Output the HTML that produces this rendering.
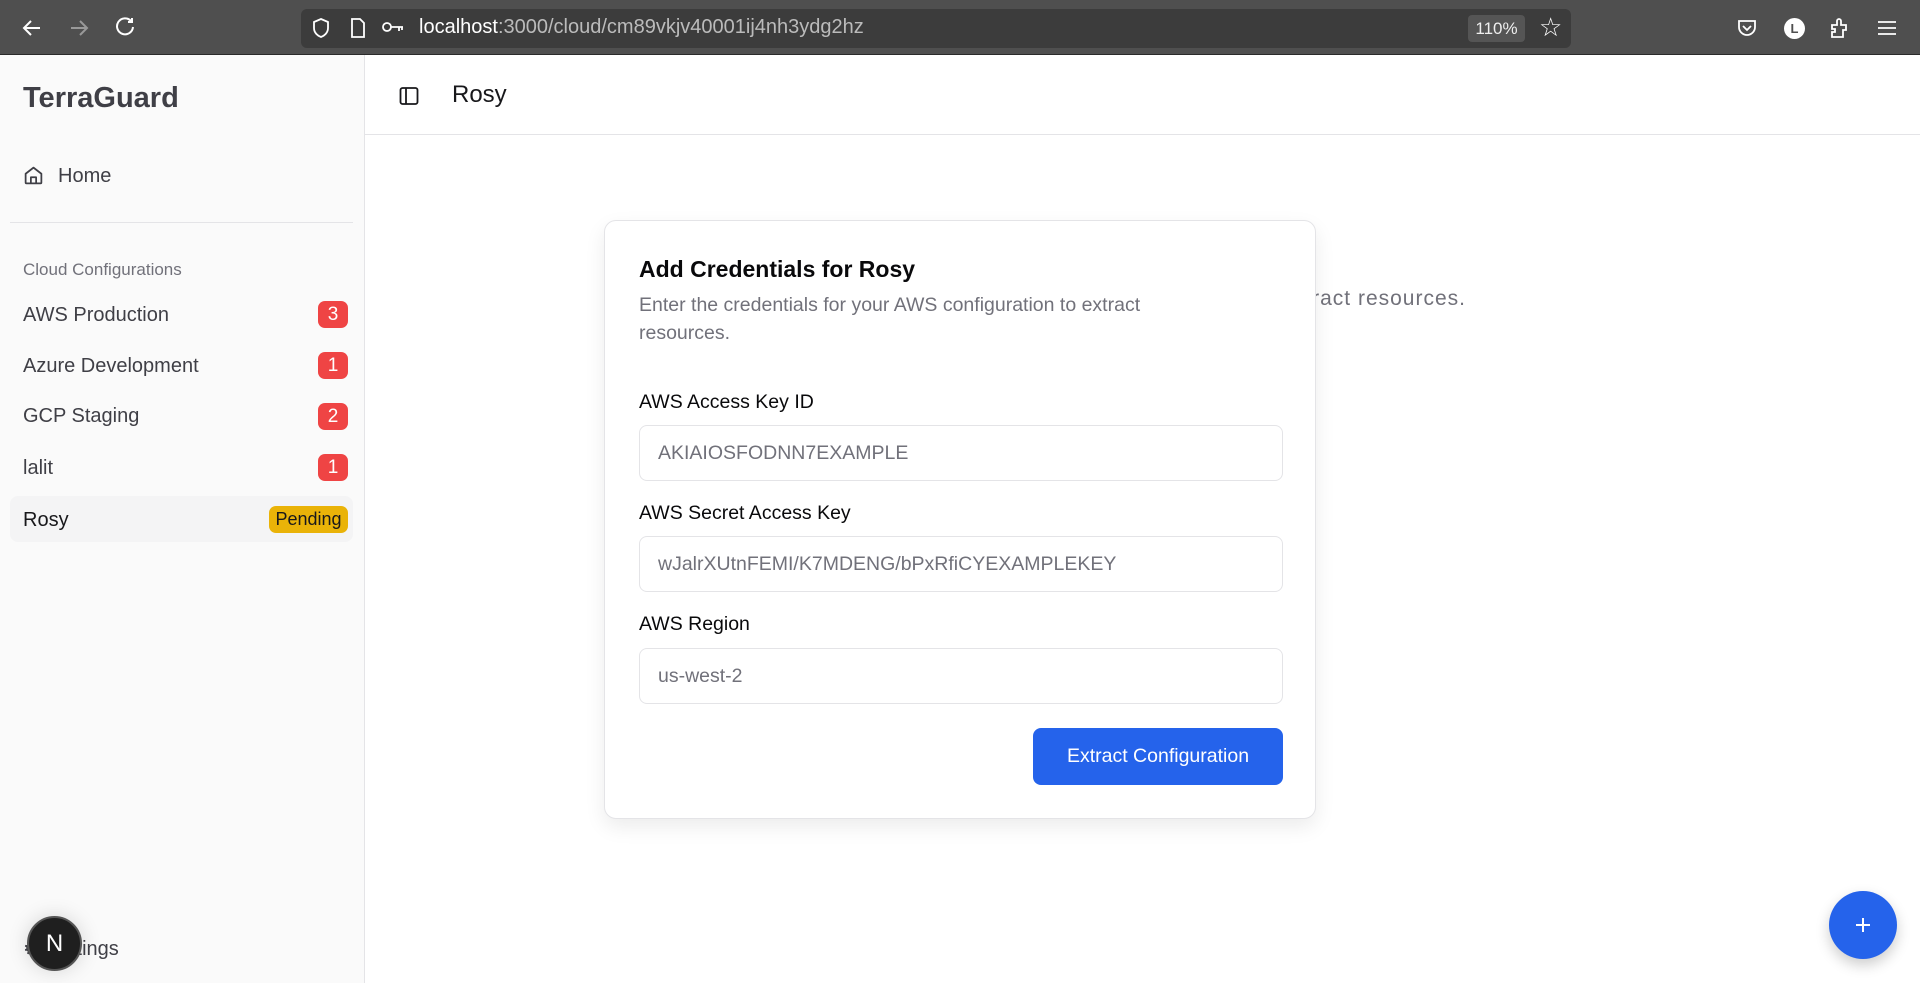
<!DOCTYPE html>
<html><head><meta charset="utf-8"><style>
*{box-sizing:border-box;margin:0;padding:0}
body{width:1920px;height:983px;overflow:hidden;font-family:"Liberation Sans",sans-serif;background:#fff;position:relative;color:#18181b}
.abs{position:absolute}
.bar{left:0;top:0;width:1920px;height:55px;background:#4f4f4f;border-bottom:1px solid #2a2a2a}
.url{left:301px;top:9px;width:1270px;height:39px;background:#3c3c3c;border-radius:6px}
.side{left:0;top:55px;width:365px;height:928px;background:#fafafa;border-right:1px solid #e4e4e7}
.item{position:absolute;left:23px;font-size:20px;color:#3f3f46;line-height:24px}
.badge{position:absolute;left:318px;width:30px;height:27px;border-radius:7px;background:#ef4444;color:#fff;font-size:19px;text-align:center;line-height:27px}
.card{left:604px;top:220px;width:712px;height:599px;background:#fff;border:1px solid #e4e4e7;border-radius:12px;box-shadow:0 8px 20px rgba(0,0,0,.08)}
.lbl{position:absolute;left:34px;font-size:19.5px;color:#09090b;font-weight:500}
.inp{position:absolute;left:34px;width:644px;height:56px;border:1px solid #e4e4e7;border-radius:8px;font-size:19.5px;color:#71717a;padding-left:18px;line-height:54px}
</style></head><body>
<div class="abs bar"></div>
<svg class="abs" style="left:20px;top:17px" width="24" height="22" viewBox="0 0 24 22" fill="none" stroke="#fff" stroke-width="2"><path d="M20 11H4M11 4l-7 7 7 7"/></svg>
<svg class="abs" style="left:67px;top:17px" width="24" height="22" viewBox="0 0 24 22" fill="none" stroke="#999" stroke-width="2"><path d="M4 11h16M13 4l7 7-7 7"/></svg>
<svg class="abs" style="left:114px;top:16px" width="22" height="22" viewBox="0 0 22 22" fill="none" stroke="#fff" stroke-width="2"><path d="M17 5A8 8 0 1 0 19 11"/><path d="M18 2v4h-4"/></svg>
<div class="abs url"></div>
<svg class="abs" style="left:311px;top:17px" width="20" height="22" viewBox="0 0 20 22" fill="none" stroke="#fff" stroke-width="1.8"><path d="M10 2l7 3v6c0 5-4 8-7 9-3-1-7-4-7-9V5z"/></svg>
<svg class="abs" style="left:349px;top:18px" width="18" height="20" viewBox="0 0 18 20" fill="none" stroke="#fff" stroke-width="1.8"><path d="M3 1h8l4 4v14H3z"/></svg>
<svg class="abs" style="left:382px;top:20px" width="22" height="14" viewBox="0 0 22 14" fill="none" stroke="#fff" stroke-width="1.8"><circle cx="5" cy="7" r="4"/><path d="M9 7h12M17 7v4M20 7v3"/></svg>
<div class="abs" style="left:419px;top:16px;font-size:20px;color:#fff">localhost<span style="color:#bbb">:3000/cloud/cm89vkjv40001ij4nh3ydg2hz</span></div>
<div class="abs" style="left:1468px;top:15px;width:57px;height:27px;background:#555;border-radius:4px;color:#eee;font-size:17px;text-align:center;line-height:27px">110%</div>
<div class="abs" style="left:1539px;top:12px;font-size:26px;color:#fff">☆</div>
<svg class="abs" style="left:1737px;top:18px" width="20" height="20" viewBox="0 0 20 20" fill="none" stroke="#fff" stroke-width="1.8"><path d="M2 3h16v6a8 8 0 0 1-16 0z"/><path d="M6 8l4 4 4-4"/></svg>
<div class="abs" style="left:1784px;top:18px;width:21px;height:21px;border-radius:50%;background:#fff;color:#4f4f4f;font-size:13px;font-weight:bold;text-align:center;line-height:21px">L</div>
<svg class="abs" style="left:1830px;top:17px" width="20" height="22" viewBox="0 0 20 22" fill="none" stroke="#fff" stroke-width="1.8"><path d="M2 8h5V4a2 2 0 0 1 4 0v4h5v5h-3v7H2v-5h3v-3H2z"/></svg>
<svg class="abs" style="left:1877px;top:20px" width="20" height="16" viewBox="0 0 20 16" stroke="#fff" stroke-width="1.8"><path d="M1 2h18M1 8h18M1 14h18"/></svg>

<div class="abs side"></div>
<div class="abs" style="left:23px;top:82px;font-size:29px;font-weight:bold;color:#3f3f46">TerraGuard</div>
<svg class="abs" style="left:23px;top:165px" width="21" height="21" viewBox="0 0 24 24" fill="none" stroke="#3f3f46" stroke-width="2" stroke-linejoin="round"><path d="M3 10l9-7 9 7v10a1 1 0 0 1-1 1H4a1 1 0 0 1-1-1z"/><path d="M9 21v-7h6v7"/></svg>
<div class="item" style="left:58px;top:164px">Home</div>
<div class="abs" style="left:10px;top:222px;width:343px;height:1px;background:#e4e4e7"></div>
<div class="item" style="top:258px;font-size:17px;color:#71717a">Cloud Configurations</div>
<div class="item" style="top:303px">AWS Production</div><div class="badge" style="top:301px">3</div>
<div class="item" style="top:354px">Azure Development</div><div class="badge" style="top:352px">1</div>
<div class="item" style="top:404px">GCP Staging</div><div class="badge" style="top:403px">2</div>
<div class="item" style="top:456px">lalit</div><div class="badge" style="top:454px">1</div>
<div class="abs" style="left:10px;top:496px;width:343px;height:46px;background:#f4f4f5;border-radius:8px"></div>
<div class="item" style="top:508px;color:#18181b;font-weight:500">Rosy</div>
<div class="badge" style="top:506px;left:269px;width:79px;background:#eab308;color:#18181b;font-size:18px">Pending</div>
<div class="item" style="top:937px">⚙ Settings</div>
<div class="abs" style="left:27px;top:916px;width:55px;height:55px;border-radius:50%;background:#1f1f1f;border:2px solid #555;color:#fff;font-size:24px;text-align:center;line-height:51px;box-shadow:0 0 20px rgba(0,0,0,.15)">N</div>

<div class="abs" style="left:365px;top:134px;width:1555px;height:1px;background:#e4e4e7"></div>
<svg class="abs" style="left:399px;top:86px" width="20" height="20" viewBox="0 0 20 20" fill="none" stroke="#18181b" stroke-width="1.8"><rect x="1.5" y="2" width="17" height="16" rx="2"/><path d="M7 2v16"/></svg>
<div class="abs" style="left:452px;top:81px;font-size:24px;font-weight:500">Rosy</div>
<div class="abs" style="left:1000px;top:287px;width:466px;text-align:right;font-size:21px;letter-spacing:1px;color:#71717a">xtract resources.</div>

<div class="abs card">
<div class="abs" style="left:34px;top:35px;font-size:23px;font-weight:600;color:#09090b">Add Credentials for Rosy</div>
<div class="abs" style="left:34px;top:70px;width:560px;font-size:19.5px;line-height:28px;color:#71717a">Enter the credentials for your AWS configuration to extract resources.</div>
<div class="lbl" style="top:170px">AWS Access Key ID</div>
<div class="inp" style="top:204px">AKIAIOSFODNN7EXAMPLE</div>
<div class="lbl" style="top:281px">AWS Secret Access Key</div>
<div class="inp" style="top:315px">wJalrXUtnFEMI/K7MDENG/bPxRfiCYEXAMPLEKEY</div>
<div class="lbl" style="top:392px">AWS Region</div>
<div class="inp" style="top:427px">us-west-2</div>
<div class="abs" style="left:428px;top:507px;width:250px;height:57px;background:#2563eb;border-radius:8px;color:#fff;font-size:19.5px;font-weight:500;text-align:center;line-height:57px">Extract Configuration</div>
</div>

<div class="abs" style="left:1829px;top:891px;width:68px;height:68px;border-radius:50%;background:#2563eb;box-shadow:0 6px 14px rgba(0,0,0,.2)"></div>
<svg class="abs" style="left:1854px;top:916px" width="18" height="18" viewBox="0 0 18 18" stroke="#fff" stroke-width="2"><path d="M9 2v14M2 9h14"/></svg>
</body></html>
